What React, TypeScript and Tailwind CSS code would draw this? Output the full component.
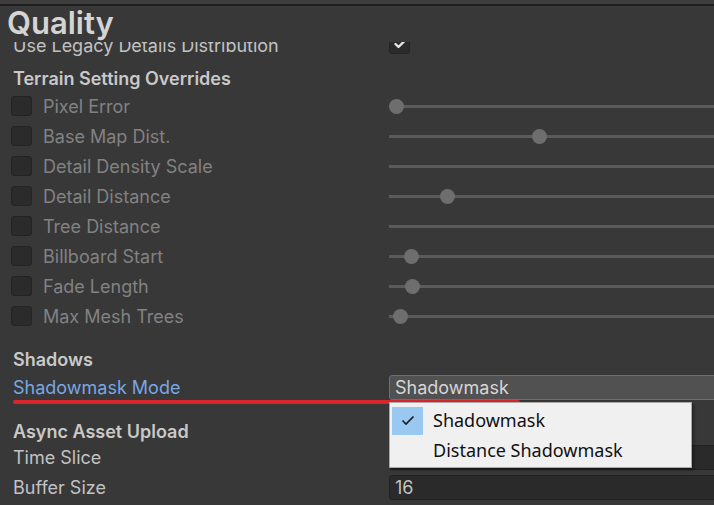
import React from 'react';

type Override = { label: string; thumb: number | null };

// thumb = offset in px of the knob centre from the start of the track
const overrides: Override[] = [
  { label: 'Pixel Error', thumb: 7 },
  { label: 'Base Map Dist.', thumb: 150 },
  { label: 'Detail Density Scale', thumb: null },
  { label: 'Detail Distance', thumb: 58 },
  { label: 'Tree Distance', thumb: null },
  { label: 'Billboard Start', thumb: 22 },
  { label: 'Fade Length', thumb: 23 },
  { label: 'Max Mesh Trees', thumb: 11 },
];

const Checkbox: React.FC<{ checked?: boolean }> = ({ checked }) => (
  <div className="w-[21px] h-[20px] shrink-0 rounded-[3px] bg-[#2b2b2b] border border-[#242424] flex items-center justify-center">
    {checked && (
      <svg width="12" height="10" viewBox="0 0 12 10">
        <path d="M1.5 5 L4.5 8 L10.5 2" fill="none" stroke="#e4e4e4" strokeWidth="2.4" strokeLinecap="round" strokeLinejoin="round" />
      </svg>
    )}
  </div>
);

const Slider: React.FC<{ thumb: number | null }> = ({ thumb }) => (
  <div className="relative h-[30px] flex items-center">
    <div className="h-[3px] w-full bg-[#5b5b5b]" />
    {thumb !== null && (
      <div
        className="absolute top-[7.5px] w-[15px] h-[15px] rounded-full bg-[#6e6e6e]"
        style={{ left: thumb - 7.5 }}
      />
    )}
  </div>
);

const Heading: React.FC<{ children: React.ReactNode; className: string }> = ({ children, className }) => (
  <div className={`${className} flex items-end`}>
    <span className="text-[18px] font-semibold leading-[24px] text-[#c9c9c9]">{children}</span>
  </div>
);

const FieldRow: React.FC<{ label: string; value?: string }> = ({ label, value }) => (
  <div className="h-[30px] flex items-center">
    <div className="w-[376px] shrink-0 text-[18px] text-[#c2c2c2]">{label}</div>
    <div className="w-[340px] shrink-0 h-[25px] rounded-[3px] bg-[#2a2a2a] border border-[#212121] flex items-center px-[5px] text-[18px] text-[#c2c2c2]">
      {value}
    </div>
  </div>
);

const App: React.FC = () => {
  return (
    <div className="relative w-[714px] h-[505px] overflow-hidden bg-[#383838] font-['Inter',sans-serif]">
      <div className="h-[4px] bg-[#3d3d3d]" />
      <div className="h-[2px] bg-[#1e1e1e]" />

      {/* Window title */}
      <div className="h-[36px] pl-[7px] flex items-start pt-[1px]">
        <span className="text-[31px] font-semibold leading-[32px] text-[#d4d4d4]">Quality</span>
      </div>

      <div className="pl-[13px]">
        {/* row scrolled up under the title */}
        <div className="h-[15px] overflow-hidden">
          <div className="-mt-[12px] h-[30px] flex items-center">
            <div className="w-[376px] shrink-0 text-[18px] text-[#c2c2c2]">Use Legacy Details Distribution</div>
            <div className="mb-[2px]">
              <Checkbox checked />
            </div>
          </div>
        </div>

        <Heading className="h-[34px]">Terrain Setting Overrides</Heading>

        {overrides.map((o) => (
          <div key={o.label} className="h-[30px] flex items-center">
            <div className="w-[376px] shrink-0 flex items-center gap-[11px] -ml-[2px] pr-[2px] box-content">
              <Checkbox />
              <span className="text-[18px] text-[#828282]">{o.label}</span>
            </div>
            <div className="w-[340px] shrink-0">
              <Slider thumb={o.thumb} />
            </div>
          </div>
        ))}

        <Heading className="h-[41px]">Shadows</Heading>

        <div className="h-[30px] flex items-center">
          <div className="w-[376px] shrink-0 text-[18px] text-[#7aa6e4]">Shadowmask Mode</div>
          <div className="w-[340px] shrink-0 h-[25px] rounded-[3px] bg-[#515151] border border-[#3a79bb] flex items-center px-[5px] text-[18px] text-[#d6d6d6]">
            Shadowmask
          </div>
        </div>

        <Heading className="h-[40px] [&>span]:-mb-[2px]">Async Asset Upload</Heading>
        <FieldRow label="Time Slice" />
        <FieldRow label="Buffer Size" value="16" />
      </div>

      {/* red annotation underline */}
      <div className="absolute left-[13px] top-[400px] w-[507px] h-[4px] rounded-full bg-[#d7262c]" />

      {/* open popup menu */}
      <div className="absolute left-[389px] top-[402px] w-[303px] h-[66px] bg-[#f0f0f0] border border-[#a9a9a9] shadow-[2px_2px_3px_rgba(0,0,0,0.35)] py-[3px] pl-[2px] font-['Noto_Sans',sans-serif] text-[18px] text-[#111]">
        <div className="h-[29px] flex items-center">
          <div className="w-[31px] h-[28px] bg-[#99c9f0] flex items-center justify-center">
            <svg width="14" height="11" viewBox="0 0 14 11">
              <path d="M1.5 5.5 L5 9 L12.5 1.5" fill="none" stroke="#1a1a1a" strokeWidth="1.6" />
            </svg>
          </div>
          <span className="ml-[10px]">Shadowmask</span>
        </div>
        <div className="h-[30px] flex items-center">
          <span className="ml-[41px]">Distance Shadowmask</span>
        </div>
      </div>
    </div>
  );
};

export default App;
